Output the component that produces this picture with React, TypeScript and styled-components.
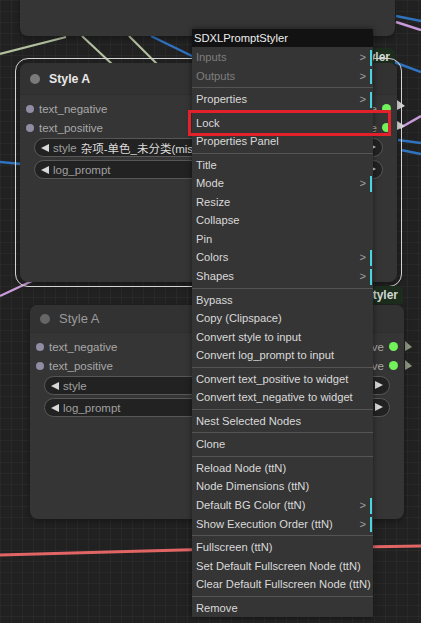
import styled, { createGlobalStyle } from "styled-components";

const GlobalStyle = createGlobalStyle`
  html, body {
    margin: 0;
    padding: 0;
    background: #222;
  }
  body {
    font-family: "Liberation Sans", Arial, sans-serif;
    overflow: hidden;
  }
`;

type MenuEntry =
  | { kind: "sep" }
  | { kind: "item"; label: string; disabled?: boolean; sub?: boolean };

const menuEntries: MenuEntry[] = [
  { kind: "item", label: "Inputs", disabled: true, sub: true },
  { kind: "item", label: "Outputs", disabled: true, sub: true },
  { kind: "sep" },
  { kind: "item", label: "Properties", sub: true },
  { kind: "sep" },
  { kind: "item", label: "Lock" },
  { kind: "item", label: "Properties Panel" },
  { kind: "sep" },
  { kind: "item", label: "Title" },
  { kind: "item", label: "Mode", sub: true },
  { kind: "item", label: "Resize" },
  { kind: "item", label: "Collapse" },
  { kind: "item", label: "Pin" },
  { kind: "item", label: "Colors", sub: true },
  { kind: "item", label: "Shapes", sub: true },
  { kind: "sep" },
  { kind: "item", label: "Bypass" },
  { kind: "item", label: "Copy (Clipspace)" },
  { kind: "item", label: "Convert style to input" },
  { kind: "item", label: "Convert log_prompt to input" },
  { kind: "sep" },
  { kind: "item", label: "Convert text_positive to widget" },
  { kind: "item", label: "Convert text_negative to widget" },
  { kind: "sep" },
  { kind: "item", label: "Nest Selected Nodes" },
  { kind: "sep" },
  { kind: "item", label: "Clone" },
  { kind: "sep" },
  { kind: "item", label: "Reload Node (ttN)" },
  { kind: "item", label: "Node Dimensions (ttN)" },
  { kind: "item", label: "Default BG Color (ttN)", sub: true },
  { kind: "item", label: "Show Execution Order (ttN)", sub: true },
  { kind: "sep" },
  { kind: "item", label: "Fullscreen (ttN)" },
  { kind: "item", label: "Set Default Fullscreen Node (ttN)" },
  { kind: "item", label: "Clear Default Fullscreen Node (ttN)" },
  { kind: "sep" },
  { kind: "item", label: "Remove" },
];

type StyleNodeProps = {
  x: number;
  y: number;
  w: number;
  h: number;
  titleH: number;
  selected?: boolean;
  styleValue?: string;
  outNeg: string;
  outPos: string;
};

function StyleNode({ x, y, w, h, titleH, selected, styleValue, outNeg, outPos }: StyleNodeProps) {
  return (
    <NodeBox $x={x} $y={y} $w={w} $h={h} $selected={selected}>
      <TitleBar $h={titleH}>
        <TitleDot $selected={selected} />
        <TitleText $selected={selected}>Style A</TitleText>
      </TitleBar>
      <NodeBody>
        <SlotRow>
          <SlotSide>
            <InDot />
            <SlotLabel>text_negative</SlotLabel>
          </SlotSide>
          <SlotSide>
            <SlotLabel>{outNeg}</SlotLabel>
            <OutDot />
          </SlotSide>
        </SlotRow>
        <SlotRow>
          <SlotSide>
            <InDot />
            <SlotLabel>text_positive</SlotLabel>
          </SlotSide>
          <SlotSide>
            <SlotLabel>{outPos}</SlotLabel>
            <OutDot />
          </SlotSide>
        </SlotRow>
        <Widgets>
          <Pill>
            <ArrowLeft />
            <PillLabel>style</PillLabel>
            {styleValue && <PillValue>{styleValue}</PillValue>}
            <ArrowRight />
          </Pill>
          <Pill>
            <ArrowLeft />
            <PillLabel>log_prompt</PillLabel>
            <ArrowRight />
          </Pill>
        </Widgets>
      </NodeBody>
    </NodeBox>
  );
}

export default function App() {
  return (
    <>
      <GlobalStyle />
      <Canvas>
        <Wires width="421" height="623" viewBox="0 0 421 623">
          <g stroke="#b3c19f" strokeWidth="2.2" fill="none">
            <line x1="0" y1="54" x2="66" y2="37" />
            <line x1="82" y1="36" x2="113" y2="65" />
            <line x1="129" y1="36" x2="158" y2="65" />
          </g>
          <g stroke="#2f73c0" strokeWidth="2.4" fill="none">
            <line x1="151" y1="36" x2="194" y2="57" />
            <line x1="396" y1="16" x2="421" y2="21" />
            <line x1="394" y1="62" x2="421" y2="72" />
            <line x1="398" y1="140" x2="421" y2="143" />
            <line x1="401" y1="150" x2="421" y2="154" />
            <line x1="0" y1="162" x2="22" y2="164" />
          </g>
          <g stroke="#c99ad9" strokeWidth="2.4" fill="none">
            <line x1="396" y1="22" x2="421" y2="30" />
            <line x1="400" y1="128" x2="421" y2="116" />
            <line x1="0" y1="296" x2="32" y2="281" />
          </g>
          <path
            d="M0 555 L200 549.5 L421 546"
            stroke="#e26565"
            strokeWidth="3"
            fill="none"
          />
          <g fill="#d6d6d6">
            <polygon points="397,100 405,106 397,110" />
            <polygon points="397,121 405,126 397,130" />
          </g>
          <g fill="#8d957f">
            <polygon points="405,341 412,347 405,351" />
            <polygon points="405,360 412,366 405,370" />
          </g>
        </Wires>

        <NodeBox $x={20} $y={-100} $w={375} $h={136} />

        <Badge $right={26} $y={48} $h={18}>Styler</Badge>
        <StyleNode
          x={20}
          y={63}
          w={377}
          h={219}
          titleH={32}
          selected
          styleValue="杂项-单色_未分类(mis"
          outNeg="e"
          outPos="e"
        />

        <Badge $right={18} $y={286} $h={18}>Styler</Badge>
        <StyleNode x={30} y={305} w={374} h={214} titleH={28} outNeg="ive" outPos="ive" />

        <Menu>
          <MenuHeader>SDXLPromptStyler</MenuHeader>
          <MenuList>
            {menuEntries.map((e, i) =>
              e.kind === "sep" ? (
                <Separator key={`sep${i}`} />
              ) : (
                <MenuItem key={`${e.label}${i}`} $disabled={e.disabled}>
                  {e.label}
                  {e.sub && (
                    <>
                      <SubArrow>&gt;</SubArrow>
                      <SubBar />
                    </>
                  )}
                </MenuItem>
              )
            )}
          </MenuList>
        </Menu>

        <Highlight />
      </Canvas>
    </>
  );
}

const Canvas = styled.div`
  position: relative;
  width: 421px;
  height: 623px;
  overflow: hidden;
  background-color: #212121;
  background-image: linear-gradient(rgba(255, 255, 255, 0.03) 1px, transparent 1px),
    linear-gradient(90deg, rgba(255, 255, 255, 0.03) 1px, transparent 1px);
  background-size: 11px 11px;
`;

const Wires = styled.svg`
  position: absolute;
  left: 0;
  top: 0;
`;

const NodeBox = styled.div<{
  $x: number;
  $y: number;
  $w: number;
  $h: number;
  $selected?: boolean;
}>`
  position: absolute;
  left: ${(p) => p.$x}px;
  top: ${(p) => p.$y}px;
  width: ${(p) => p.$w}px;
  height: ${(p) => p.$h}px;
  background: #353535;
  border-radius: 8px;
  display: flex;
  flex-direction: column;
  box-shadow: 0 2px 6px rgba(0, 0, 0, 0.35);
  outline: ${(p) => (p.$selected ? "1.5px solid #d4d4d4" : "none")};
  outline-offset: 4px;
`;

const TitleBar = styled.div<{ $h: number }>`
  height: ${(p) => p.$h}px;
  flex-shrink: 0;
  display: flex;
  align-items: center;
  gap: 9px;
  padding-left: 10px;
  background: #323232;
  border-radius: 8px 8px 0 0;
  border-bottom: 1px solid #2e2e2e;
  box-sizing: border-box;
`;

const TitleDot = styled.span<{ $selected?: boolean }>`
  width: 10px;
  height: 10px;
  border-radius: 50%;
  background: ${(p) => (p.$selected ? "#7a7a7a" : "#666")};
`;

const TitleText = styled.span<{ $selected?: boolean }>`
  font-size: ${(p) => (p.$selected ? "12.3px" : "13px")};
  font-weight: ${(p) => (p.$selected ? 700 : 400)};
  color: ${(p) => (p.$selected ? "#e8e8e8" : "#9a9a9a")};
`;

const NodeBody = styled.div`
  padding-top: 4px;
  display: flex;
  flex-direction: column;
`;

const SlotRow = styled.div`
  height: 19px;
  display: flex;
  align-items: center;
  justify-content: space-between;
  padding: 0 6px;
`;

const SlotSide = styled.div`
  display: flex;
  align-items: center;
  gap: 5px;
`;

const SlotLabel = styled.span`
  font-size: 11.5px;
  color: #a8a8a8;
`;

const InDot = styled.span`
  width: 8px;
  height: 8px;
  border-radius: 50%;
  background: #8f8ca4;
`;

const OutDot = styled.span`
  width: 9px;
  height: 9px;
  border-radius: 50%;
  background: #72f15a;
`;

const Widgets = styled.div`
  margin-top: 1px;
  display: flex;
  flex-direction: column;
  gap: 3px;
  padding: 0 14px;
`;

const Pill = styled.div`
  position: relative;
  height: 19px;
  box-sizing: border-box;
  border: 1px solid #575757;
  border-radius: 10px;
  background: #222;
  display: flex;
  align-items: center;
  gap: 4px;
  padding: 0 20px 0 6px;
  overflow: hidden;
  white-space: nowrap;
  font-size: 11.5px;
`;

const ArrowLeft = styled.span`
  width: 0;
  height: 0;
  border-top: 4.5px solid transparent;
  border-bottom: 4.5px solid transparent;
  border-right: 8px solid #d8d8d8;
  flex-shrink: 0;
`;

const ArrowRight = styled.span`
  position: absolute;
  right: 6px;
  top: 4px;
  width: 0;
  height: 0;
  border-top: 4.5px solid transparent;
  border-bottom: 4.5px solid transparent;
  border-left: 8px solid #d8d8d8;
`;

const PillLabel = styled.span`
  color: #a0a0a0;
`;

const PillValue = styled.span`
  color: #dcdcdc;
  font-family: "Liberation Sans", "Noto Sans CJK SC", sans-serif;
`;

const Badge = styled.div<{ $right: number; $y: number; $h: number }>`
  position: absolute;
  right: ${(p) => p.$right}px;
  top: ${(p) => p.$y}px;
  height: ${(p) => p.$h}px;
  line-height: ${(p) => p.$h}px;
  padding: 0 5px 0 60px;
  border-radius: 6px 6px 0 0;
  background: #1c2d1e;
  color: #d2d8d2;
  font-size: 12px;
  font-weight: 700;
`;

const Menu = styled.div`
  position: absolute;
  left: 192px;
  top: 29px;
  width: 181px;
  background: #353535;
  box-shadow: 0 0 6px rgba(0, 0, 0, 0.5);
  font-size: 11.2px;
`;

const MenuHeader = styled.div`
  height: 18px;
  line-height: 18px;
  padding-left: 2px;
  background: #121212;
  color: #eeeeee;
`;

const MenuList = styled.div`
  padding-top: 1px;
  display: flex;
  flex-direction: column;
`;

const MenuItem = styled.div<{ $disabled?: boolean }>`
  position: relative;
  height: 18.55px;
  line-height: 18.55px;
  padding-left: 4px;
  white-space: nowrap;
  color: ${(p) => (p.$disabled ? "#7e7e7e" : "#dadada")};
`;

const SubArrow = styled.span`
  position: absolute;
  right: 7px;
  top: 0;
  color: #a0a0a0;
`;

const SubBar = styled.span`
  position: absolute;
  right: 1.5px;
  top: 2px;
  bottom: 1px;
  width: 1.5px;
  background: #47d6e0;
`;

const Separator = styled.div`
  height: 5px;
  display: flex;
  align-items: center;
  &::after {
    content: "";
    flex: 1;
    height: 1px;
    background: #555;
  }
`;

const Highlight = styled.div`
  position: absolute;
  left: 188px;
  top: 110px;
  width: 203px;
  height: 26px;
  box-sizing: border-box;
  border: 3px solid #e3212b;
`;
